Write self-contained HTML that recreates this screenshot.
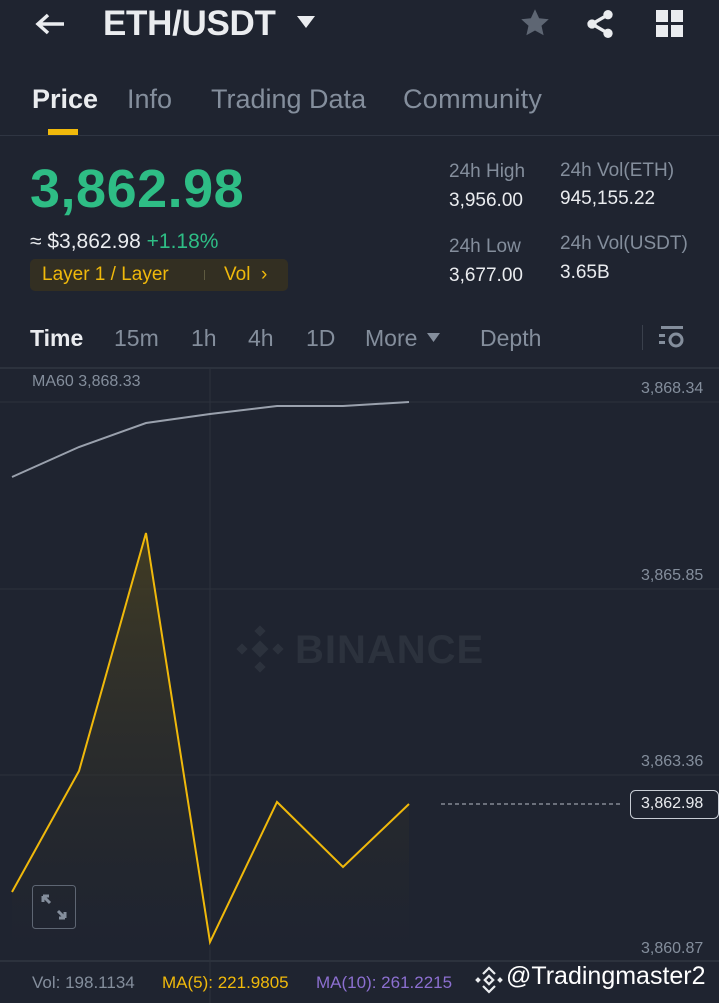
<!DOCTYPE html>
<html><head><meta charset="utf-8"><style>
*{margin:0;padding:0;box-sizing:border-box}
body{width:719px;height:1003px;background:#1f2430;font-family:"Liberation Sans",sans-serif;position:relative;overflow:hidden;color:#eaecef}
.a{position:absolute;white-space:nowrap}
.g{color:#848e9c}
</style></head><body>
<svg class="a" style="left:34px;top:12px" width="32" height="24" viewBox="0 0 32 24"><path d="M30 12H5M14 3L4 12l10 9" stroke="#eaecef" stroke-width="3.5" fill="none"/></svg>
<div class="a" style="left:103px;top:4px;font-size:35px;font-weight:bold;letter-spacing:-0.3px">ETH/USDT</div>
<svg class="a" style="left:297px;top:16px" width="18" height="13"><path d="M0 0h18L9 12z" fill="#eaecef"/></svg>
<svg class="a" style="left:519px;top:8px" width="32" height="30" viewBox="0 0 24 24"><path d="M12 1l3.3 7.2 7.7.8-5.8 5.2 1.7 7.6L12 18l-6.9 3.8 1.7-7.6L1 9l7.7-.8z" fill="#5e6673"/></svg>
<svg class="a" style="left:584px;top:8px" width="32" height="32" viewBox="0 0 24 24"><circle cx="18" cy="5" r="3.5" fill="#eaecef"/><circle cx="6" cy="12" r="3.5" fill="#eaecef"/><circle cx="18" cy="19" r="3.5" fill="#eaecef"/><path d="M18 5L6 12l12 7" stroke="#eaecef" stroke-width="2.5" fill="none"/></svg>
<svg class="a" style="left:656px;top:10px" width="28" height="28"><rect x="0" y="0" width="12" height="12" fill="#eaecef"/><rect x="15" y="0" width="12" height="12" fill="#eaecef"/><rect x="0" y="15" width="12" height="12" fill="#eaecef"/><rect x="15" y="15" width="12" height="12" fill="#eaecef"/></svg>

<div class="a" style="left:32px;top:84px;font-size:27px;font-weight:bold">Price</div>
<div class="a g" style="left:127px;top:84px;font-size:27px">Info</div>
<div class="a g" style="left:211px;top:84px;font-size:27px">Trading Data</div>
<div class="a g" style="left:403px;top:84px;font-size:27px;letter-spacing:0.3px">Community</div>
<div class="a" style="left:48px;top:129px;width:30px;height:6px;background:#f0b90b"></div>
<div class="a" style="left:0;top:135px;width:719px;height:1px;background:#2f3542"></div>

<div class="a" style="left:30px;top:158px;font-size:54px;font-weight:bold;color:#2ebd85;letter-spacing:0.5px">3,862.98</div>
<div class="a" style="left:30px;top:230px;font-size:21px">≈ $3,862.98 <span style="color:#2ebd85">+1.18%</span></div>
<div class="a" style="left:30px;top:259px;width:258px;height:32px;background:#332f22;border-radius:5px"></div>
<div class="a" style="left:42px;top:264px;font-size:19px;color:#f0b90b">Layer 1 / Layer</div>
<div class="a" style="left:204px;top:270px;width:1px;height:10px;background:#5e5a40"></div>
<div class="a" style="left:224px;top:264px;font-size:19px;color:#f0b90b">Vol &nbsp;›</div>

<div class="a g" style="left:449px;top:161px;font-size:19px">24h High</div>
<div class="a" style="left:449px;top:190px;font-size:19px">3,956.00</div>
<div class="a g" style="left:449px;top:236px;font-size:19px">24h Low</div>
<div class="a" style="left:449px;top:265px;font-size:19px">3,677.00</div>
<div class="a g" style="left:560px;top:160px;font-size:19px">24h Vol(ETH)</div>
<div class="a" style="left:560px;top:188px;font-size:19px">945,155.22</div>
<div class="a g" style="left:560px;top:233px;font-size:19px">24h Vol(USDT)</div>
<div class="a" style="left:560px;top:262px;font-size:19px">3.65B</div>

<div class="a" style="left:30px;top:325px;font-size:23px;font-weight:bold">Time</div>
<div class="a g" style="left:114px;top:325px;font-size:23px">15m</div>
<div class="a g" style="left:191px;top:325px;font-size:23px">1h</div>
<div class="a g" style="left:248px;top:325px;font-size:23px">4h</div>
<div class="a g" style="left:306px;top:325px;font-size:23px">1D</div>
<div class="a g" style="left:365px;top:325px;font-size:23px">More</div>
<svg class="a" style="left:427px;top:333px" width="13" height="9"><path d="M0 0h13L6.5 9z" fill="#848e9c"/></svg>
<div class="a g" style="left:480px;top:325px;font-size:23px">Depth</div>
<div class="a" style="left:642px;top:325px;width:1px;height:25px;background:#3a404c"></div>
<svg class="a" style="left:659px;top:326px" width="26" height="24"><rect x="2" y="0" width="22" height="3" fill="#848e9c"/><rect x="0" y="8" width="6" height="3" fill="#848e9c"/><rect x="0" y="15" width="6" height="3" fill="#848e9c"/><circle cx="17" cy="14" r="6" fill="none" stroke="#848e9c" stroke-width="3"/></svg>

<svg class="a" style="left:0;top:366px" width="719" height="637" viewBox="0 366 719 637">
<defs><linearGradient id="f" x1="0" y1="0" x2="0" y2="1"><stop offset="0" stop-color="#4a4220" stop-opacity=".8"/><stop offset="1" stop-color="#1f2430" stop-opacity=".3"/></linearGradient></defs>
<line x1="0" y1="368" x2="719" y2="368" stroke="#2c323d" stroke-width="2"/>
<line x1="0" y1="402" x2="719" y2="402" stroke="#2c323d"/>
<line x1="0" y1="589" x2="719" y2="589" stroke="#2c323d"/>
<line x1="0" y1="775" x2="719" y2="775" stroke="#2c323d"/>
<line x1="0" y1="961" x2="719" y2="961" stroke="#2c323d" stroke-width="2"/>
<line x1="210" y1="368" x2="210" y2="1003" stroke="#2c323d"/>
<path d="M12 892L79 771 146 533 210 942 277 802 343 867 409 804V950H12z" fill="url(#f)"/>
<polyline points="12,892 79,771 146,533 210,942 277,802 343,867 409,804" fill="none" stroke="#f0b90b" stroke-width="2"/>
<polyline points="12,477 79,447 146,423 210,414 277,406 343,406 409,402" fill="none" stroke="#9aa1ad" stroke-width="2"/>
<line x1="441" y1="804" x2="622" y2="804" stroke="#b7bdc6" stroke-dasharray="4,3"/>
<rect x="630.5" y="790.5" width="88" height="28" rx="5" fill="#1f2430" stroke="#c7ccd3"/>
<g fill="#2c323d" transform="translate(260,649)"><rect x="-6" y="-6" width="12" height="12" transform="rotate(45)"/><rect x="-4" y="-22" width="8" height="8" transform="rotate(45 0 -18)"/><rect x="-4" y="14" width="8" height="8" transform="rotate(45 0 18)"/><rect x="-22" y="-4" width="8" height="8" transform="rotate(45 -18 0)"/><rect x="14" y="-4" width="8" height="8" transform="rotate(45 18 0)"/></g>
<text x="295" y="663" font-family="Liberation Sans" font-weight="bold" font-size="40" fill="#2c323d" letter-spacing="1">BINANCE</text>
<rect x="32.5" y="885.5" width="43" height="43" rx="3" fill="none" stroke="#5e6673"/>
<path d="M43 896l7 7M43 896h6M43 896v6M65 918l-7-7M65 918h-6M65 918v-6" stroke="#848e9c" stroke-width="3" fill="none"/>
</svg>
<div class="a g" style="left:32px;top:373px;font-size:16px">MA60 3,868.33</div>
<div class="a g" style="left:641px;top:380px;font-size:16px">3,868.34</div>
<div class="a g" style="left:641px;top:567px;font-size:16px">3,865.85</div>
<div class="a g" style="left:641px;top:753px;font-size:16px">3,863.36</div>
<div class="a" style="left:641px;top:795px;font-size:16px">3,862.98</div>
<div class="a g" style="left:641px;top:940px;font-size:16px">3,860.87</div>

<div class="a g" style="left:32px;top:973px;font-size:17px">Vol: 198.1134</div>
<div class="a" style="left:162px;top:973px;font-size:17px;color:#f0b90b">MA(5): 221.9805</div>
<div class="a" style="left:316px;top:973px;font-size:17px;color:#8c6fd0">MA(10): 261.2215</div>
<svg class="a" style="left:474px;top:965px" width="30" height="30" viewBox="-15 -15 30 30"><g fill="none" stroke="#eaecef" stroke-width="2.2"><rect x="-3" y="-3" width="6" height="6" transform="rotate(45)"/><path d="M-6 -6L0 -12 6 -6M-6 6L0 12 6 6"/></g><rect x="-13" y="-2" width="4" height="4" fill="#eaecef" transform="rotate(45 -11 0)"/><rect x="9" y="-2" width="4" height="4" fill="#eaecef" transform="rotate(45 11 0)"/></svg>
<div class="a" style="left:506px;top:962px;font-size:25px;color:#fff">@Tradingmaster2</div>
</body></html>
